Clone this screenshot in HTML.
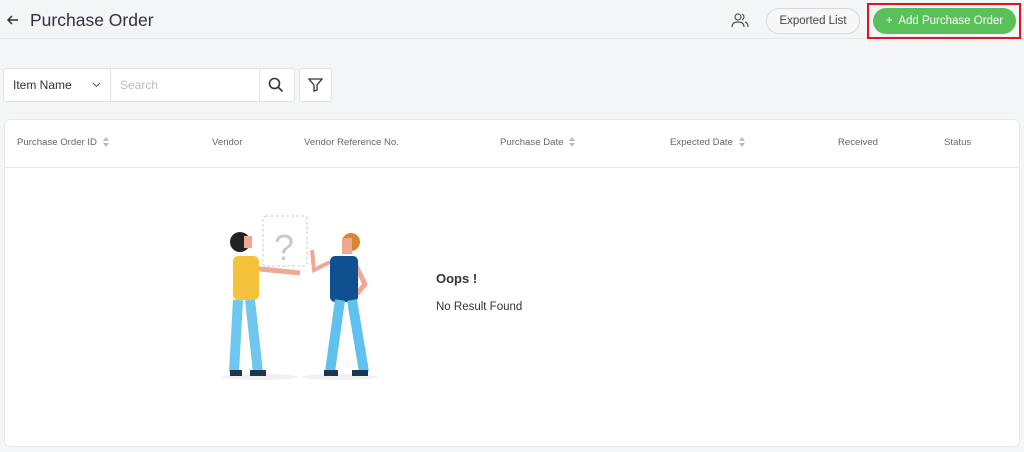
<!DOCTYPE html>
<html><head><style>
*{box-sizing:border-box;margin:0;padding:0}
body{width:1024px;height:452px;background:#f4f5f7;font-family:"Liberation Sans",sans-serif;color:#333;position:relative;overflow:hidden}
.a{position:absolute}
.th{position:absolute;top:137px;font-size:9.6px;color:#666}
.sort{display:inline-block;vertical-align:middle;margin-left:6px;width:6px;height:10px;position:relative}
.sort:before{content:"";position:absolute;top:0;left:0;border:3px solid transparent;border-bottom:4px solid #bbb;border-top:0}
.sort:after{content:"";position:absolute;bottom:0;left:0;border:3px solid transparent;border-top:4px solid #bbb;border-bottom:0}
</style></head><body>
<div class="a" style="left:0;top:38px;width:1024px;height:1px;background:#e6e7ea"></div>
<svg class="a" style="left:6px;top:13px" width="14" height="14" viewBox="0 0 14 14"><path d="M12 7H2M6 3L2 7l4 4" stroke="#333" stroke-width="1.5" fill="none"/></svg>
<div class="a" style="left:30px;top:10px;font-size:17.5px;color:#2d3340">Purchase Order</div>
<svg class="a" style="left:731px;top:12px" width="18" height="16" viewBox="0 0 18 16" fill="none" stroke="#555" stroke-width="1.2"><circle cx="7" cy="5" r="3"/><path d="M1 15c0-3.5 2.5-5 6-5s6 1.5 6 5M11 2.2a3 3 0 010 5.6M14 10c2 .6 3 2 3 5"/></svg>
<div class="a" style="left:766px;top:8px;width:94px;height:26px;border:1px solid #d8d9dc;border-radius:13px;background:#f7f7f8;font-size:11.5px;line-height:24px;text-align:center;color:#444">Exported List</div>
<div class="a" style="left:867px;top:3px;width:154px;height:36px;border:2px solid #e0161d"></div>
<div class="a" style="left:873px;top:8px;width:143px;height:26px;border-radius:13px;background:#5ac05a;color:#fff;font-size:11.5px;line-height:26px;text-align:center">+&nbsp; Add Purchase Order</div>
<div class="a" style="left:3px;top:68px;width:292px;height:34px;background:#fff;border:1px solid #e2e3e6;border-radius:3px"></div>
<div class="a" style="left:110px;top:69px;width:1px;height:32px;background:#e2e3e6"></div>
<div class="a" style="left:259px;top:69px;width:1px;height:32px;background:#e2e3e6"></div>
<div class="a" style="left:13px;top:78px;font-size:12px;color:#333">Item Name</div>
<svg class="a" style="left:92px;top:82px" width="9" height="6"><path d="M1 1l3.5 3.5L8 1" stroke="#555" fill="none"/></svg>
<div class="a" style="left:120px;top:78px;font-size:12px;color:#bbb">Search</div>
<svg class="a" style="left:268px;top:77px" width="16" height="16" fill="none" stroke="#333" stroke-width="1.6"><circle cx="6.5" cy="6.5" r="5"/><path d="M10.5 10.5l4 4"/></svg>
<div class="a" style="left:299px;top:68px;width:33px;height:34px;background:#fff;border:1px solid #e2e3e6;border-radius:3px"></div>
<svg class="a" style="left:308px;top:78px" width="15" height="14" fill="none" stroke="#333" stroke-width="1.3"><path d="M1 1h13L9 7v5l-3 1V7z"/></svg>
<div class="a" style="left:4px;top:119px;width:1016px;height:328px;background:#fff;border:1px solid #e8e9ec;border-radius:6px"></div>
<div class="a" style="left:5px;top:167px;width:1014px;height:1px;background:#e8e9ec"></div>
<div class="th" style="left:17px">Purchase Order ID<span class="sort"></span></div>
<div class="th" style="left:212px">Vendor</div>
<div class="th" style="left:304px">Vendor Reference No.</div>
<div class="th" style="left:500px">Purchase Date<span class="sort"></span></div>
<div class="th" style="left:670px">Expected Date<span class="sort"></span></div>
<div class="th" style="left:838px">Received</div>
<div class="th" style="left:944px">Status</div>
<svg class="a" style="left:200px;top:200px" width="200" height="190" viewBox="0 0 200 190">
<ellipse cx="60" cy="177" rx="38" ry="3" fill="#f0f0f0"/><ellipse cx="140" cy="177" rx="38" ry="3" fill="#f0f0f0"/>
<rect x="63" y="16" width="44" height="50" rx="3" fill="none" stroke="#ccc" stroke-dasharray="3 2"/>
<text x="74" y="60" font-size="36" fill="#c5cad1" font-family="Liberation Sans">?</text>
<path d="M50 68l50 5" stroke="#f0a895" stroke-width="5"/>
<rect x="33" y="56" width="26" height="44" rx="5" fill="#f5c33b"/>
<circle cx="40" cy="42" r="10" fill="#222"/><rect x="44" y="36" width="8" height="12" fill="#f0a895"/>
<path d="M38 100l-4 72M50 100l8 72" stroke="#6dc7ee" stroke-width="10"/>
<rect x="30" y="170" width="12" height="6" fill="#1e3550"/><rect x="50" y="170" width="16" height="6" fill="#1e3550"/>
<path d="M130 62l-16 8l-2-20" stroke="#f0a895" stroke-width="4" fill="none"/>
<path d="M155 64l10 20l-8 10" stroke="#f0a895" stroke-width="5" fill="none"/>
<rect x="130" y="56" width="28" height="46" rx="5" fill="#0f5190"/>
<circle cx="151" cy="42" r="9" fill="#d9862c"/><rect x="142" y="38" width="10" height="16" fill="#f0a895"/>
<path d="M140 100l-10 72M152 100l12 72" stroke="#5fc1ee" stroke-width="10"/>
<rect x="124" y="170" width="14" height="6" fill="#1e3550"/><rect x="152" y="170" width="16" height="6" fill="#1e3550"/>
</svg>
<div class="a" style="left:436px;top:271px;font-size:13px;font-weight:600;color:#333">Oops !</div>
<div class="a" style="left:436px;top:301px;font-size:11.5px;color:#333">No Result Found</div>
</body></html>
